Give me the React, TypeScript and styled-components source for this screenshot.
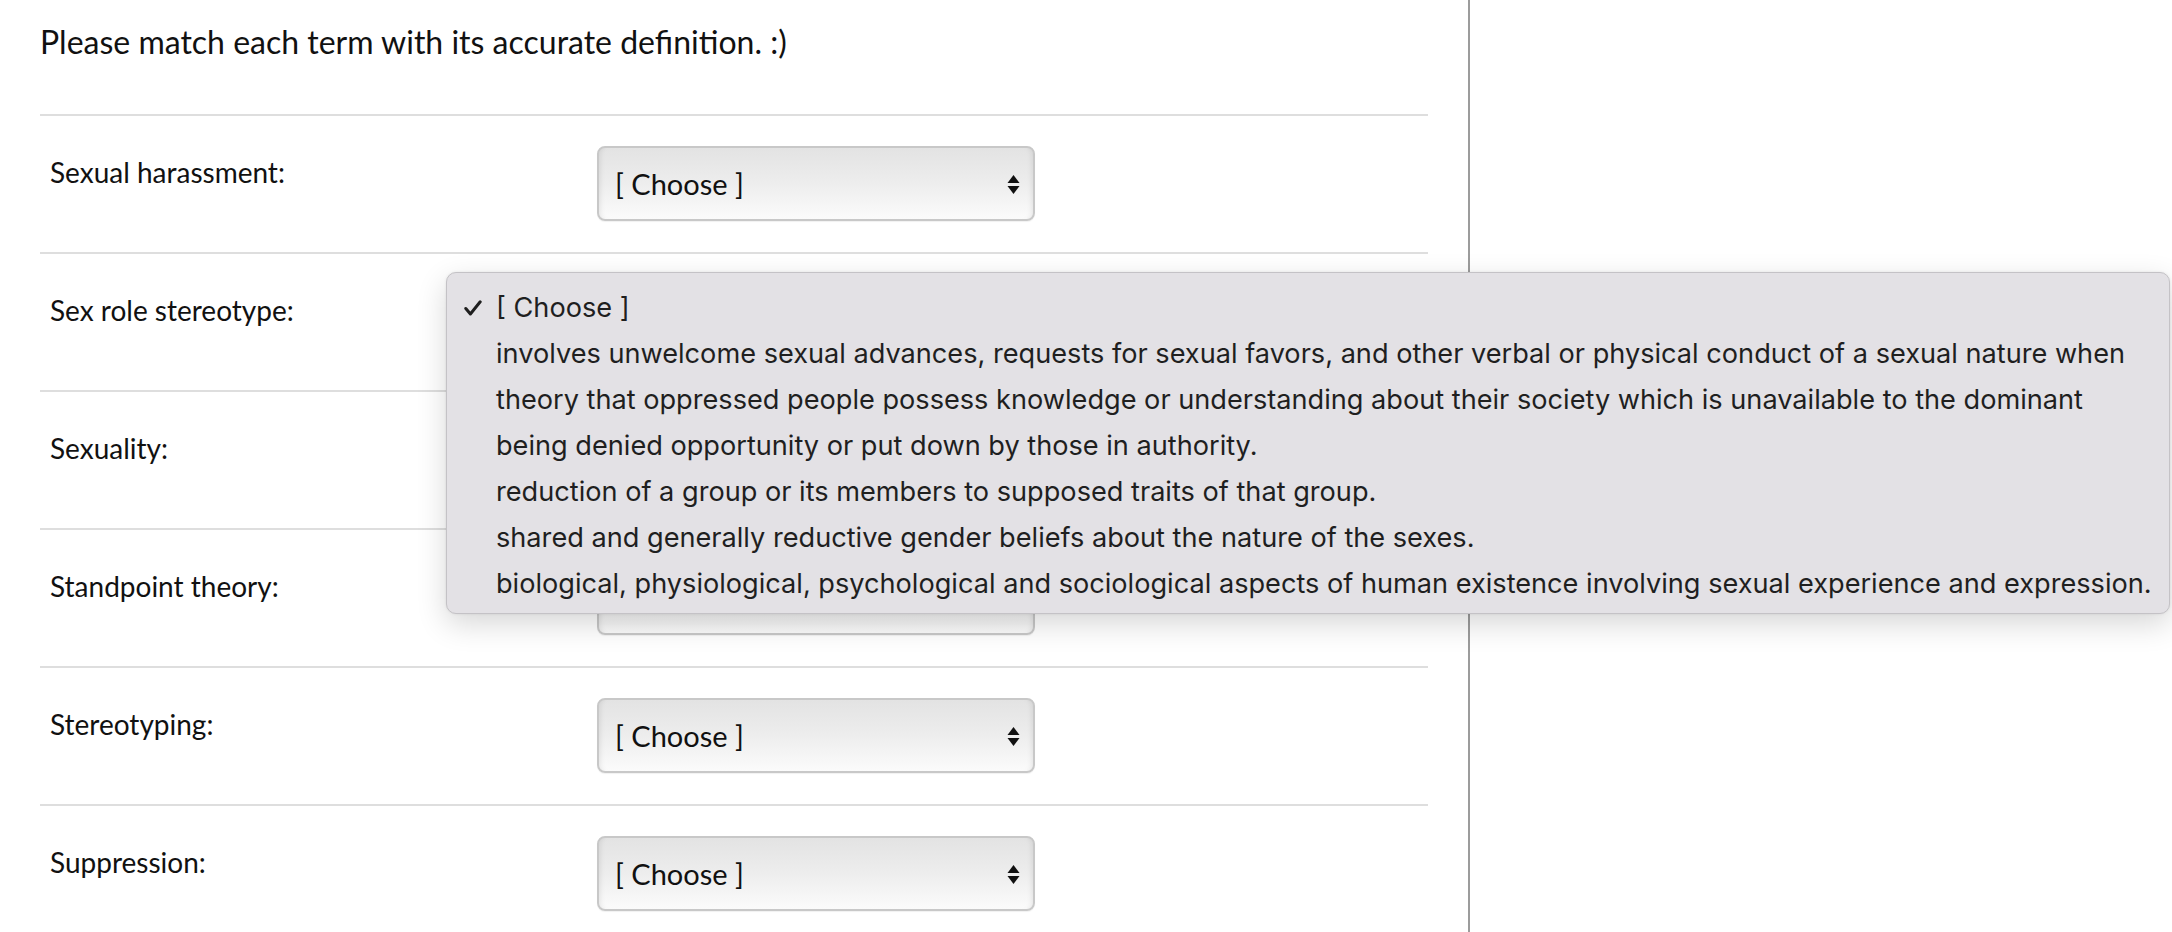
import React from "react";
import styled, { createGlobalStyle } from "styled-components";

const GlobalStyle = createGlobalStyle`
  html, body { margin: 0; padding: 0; background: #ffffff; }
  body { font-family: Lato, "Open Sans", sans-serif; color: #111111; }
  * { box-sizing: border-box; }
`;

const Page = styled.div`
  position: relative;
  display: flex;
  width: 2172px;
  height: 932px;
  overflow: hidden;
`;

const Main = styled.main`
  width: 1470px;
  flex: 0 0 1470px;
  padding: 0 40px;
  border-right: 2px solid #9c9c9c;
`;

const Aside = styled.aside`
  flex: 1;
  background: #ffffff;
`;

const Heading = styled.p`
  margin: 23px 0 53px;
  font-size: 32px;
  line-height: 38px;
  font-weight: 400;
  color: #111111;
`;

const Row = styled.div`
  display: flex;
  align-items: flex-start;
  height: 138px;
  padding: 0 10px;
  border-top: 2px solid #dedede;
`;

const Label = styled.div`
  flex: 0 0 547px;
  padding-top: 40px;
  font-size: 28px;
  line-height: 1.2;
  color: #111111;
`;

const SelectBox = styled.div`
  margin-top: 30px;
  width: 438px;
  height: 75px;
  display: flex;
  align-items: center;
  justify-content: space-between;
  padding: 0 13px 0 16px;
  border: 2px solid #c8c8c8;
  border-radius: 8px;
  background: linear-gradient(#e3e3e3 0%, #ececec 45%, #fbfbfb 100%);
  box-shadow: inset 6px 0 6px -6px rgba(0, 0, 0, 0.12),
    inset -6px 0 6px -6px rgba(0, 0, 0, 0.12), 0 1px 1px rgba(0, 0, 0, 0.06);
  font-size: 29px;
  color: #111111;
`;

const Arrows = styled.svg`
  width: 13px;
  height: 20px;
  flex: 0 0 auto;
  margin-top: 2px;
`;

const Popup = styled.div`
  position: absolute;
  left: 446px;
  top: 272px;
  right: 2px;
  height: 342px;
  padding: 11px 0 9px;
  background: #e3e1e5;
  border: 1px solid #c4c2c6;
  border-radius: 10px;
  box-shadow: 0 10px 30px rgba(0, 0, 0, 0.16), 0 0 3px rgba(0, 0, 0, 0.08);
  font-family: Inter, "Liberation Sans", sans-serif;
  font-size: 27.15px;
  color: #1f1f1f;
`;

const Item = styled.div`
  display: flex;
  align-items: center;
  height: 46px;
  padding-left: 18px;
  white-space: nowrap;
`;

const CheckCell = styled.span`
  flex: 0 0 31px;
  display: flex;
  align-items: center;
`;

const CheckSvg = styled.svg`
  width: 18px;
  height: 16px;
  margin-top: 1px;
  margin-left: -1px;
`;

const rows = [
  "Sexual harassment:",
  "Sex role stereotype:",
  "Sexuality:",
  "Standpoint theory:",
  "Stereotyping:",
  "Suppression:",
];

const options = [
  "involves unwelcome sexual advances, requests for sexual favors, and other verbal or physical conduct of a sexual nature when",
  "theory that oppressed people possess knowledge or understanding about their society which is unavailable to the dominant",
  "being denied opportunity or put down by those in authority.",
  "reduction of a group or its members to supposed traits of that group.",
  "shared and generally reductive gender beliefs about the nature of the sexes.",
  "biological, physiological, psychological and sociological aspects of human existence involving sexual experience and expression.",
];

const ArrowIcon = () => (
  <Arrows viewBox="0 0 13 20">
    <path d="M6.5 0 L12.5 8 L0.5 8 Z" fill="#111" />
    <path d="M0.5 11 L12.5 11 L6.5 19 Z" fill="#111" />
  </Arrows>
);

const CheckIcon = () => (
  <CheckSvg viewBox="0 0 18 16">
    <path
      d="M1.8 8.5 L6.4 14 L16.2 1.8"
      fill="none"
      stroke="#1f1f1f"
      strokeWidth="3"
      strokeLinecap="round"
      strokeLinejoin="round"
    />
  </CheckSvg>
);

export default function App() {
  return (
    <>
      <GlobalStyle />
      <Page>
        <Main>
          <Heading>Please match each term with its accurate definition. :)</Heading>
          {rows.map((r) => (
            <Row key={r}>
              <Label>{r}</Label>
              <SelectBox>
                <span>[ Choose ]</span>
                <ArrowIcon />
              </SelectBox>
            </Row>
          ))}
        </Main>
        <Aside />
        <Popup>
          <Item>
            <CheckCell>
              <CheckIcon />
            </CheckCell>
            <span>[ Choose ]</span>
          </Item>
          {options.map((o) => (
            <Item key={o}>
              <CheckCell />
              <span>{o}</span>
            </Item>
          ))}
        </Popup>
      </Page>
    </>
  );
}
